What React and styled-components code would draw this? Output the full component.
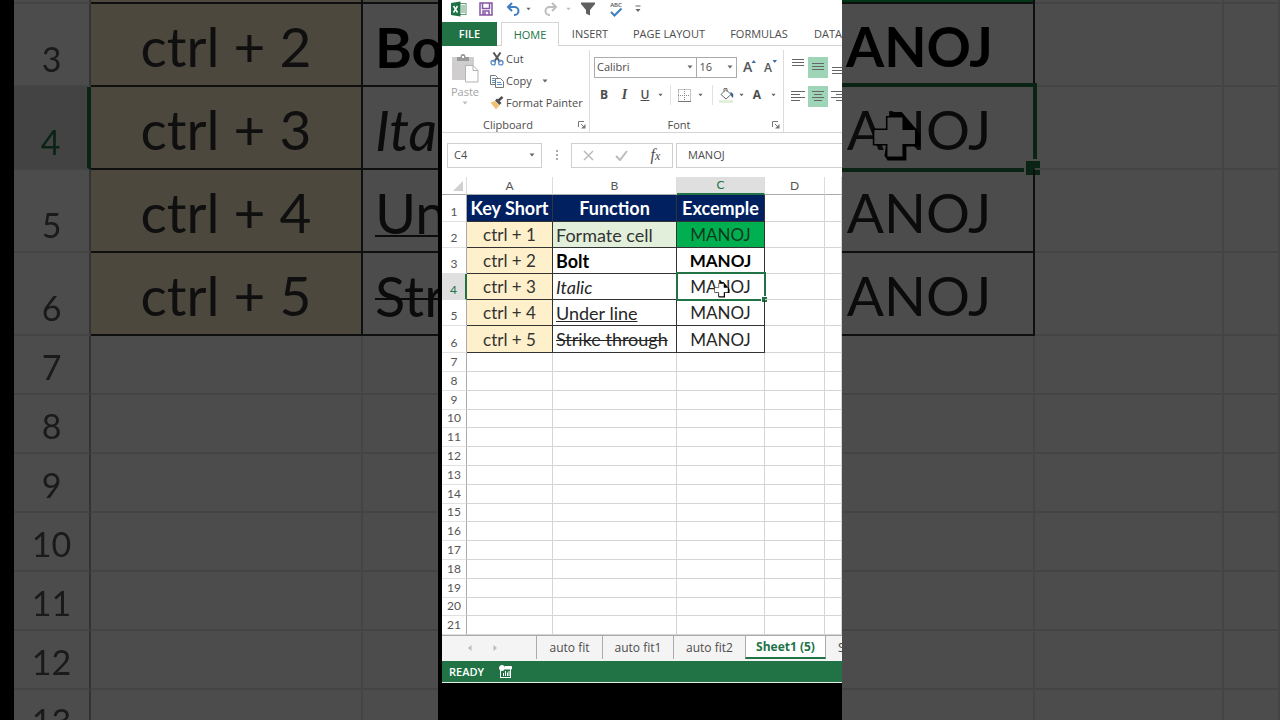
import React from 'react';
import styled, { createGlobalStyle, css } from 'styled-components';

const GlobalStyle = createGlobalStyle`
  *, *::before, *::after { box-sizing: border-box; }
  body { margin: 0; background: #000; font-family: "Open Sans", "Noto Sans", sans-serif; }
  button, input, select { font: inherit; color: inherit; margin: 0; padding: 0; border: 0; background: none; border-radius: 0; outline: none; }
`;

const green = '#217346';
const ink = '#4c4c4c';

const Stage = styled.main`
  display: grid;
  grid-template-columns: minmax(0, 1fr) 404px minmax(0, 1fr);
  height: 100vh;
  overflow: hidden;
  background: #000;
`;

const Side = styled.div`
  display: flex;
  align-items: flex-start;
  justify-content: ${(p) => (p.$right ? 'flex-end' : 'flex-start')};
  padding-left: ${(p) => (p.$right ? 0 : 14)}px;
  overflow: hidden;
  filter: brightness(0.3);
`;

const Phone = styled.div`
  padding-left: 4px;
  background: #000;
  overflow: hidden;
`;

const Workbook = styled.div`
  display: flex;
  flex-direction: column;
  background: #fff;
  color: ${ink};
  font-size: 11px;
  line-height: 16px;
  overflow: hidden;
`;

/* ---------- title and tabs ---------- */

const QuickAccess = styled.header`
  display: flex;
  align-items: center;
  height: 22px;
  padding: 0 0 4px 9px;
`;

const QuickButton = styled.button`
  display: flex;
  align-items: center;
  justify-content: center;
  width: ${(p) => p.$width}px;
  height: 18px;
`;

const Tabs = styled.nav`
  display: flex;
  height: 24px;
  border-bottom: 1px solid #d4d4d4;
`;

const Tab = styled.button`
  flex: none;
  width: ${(p) => p.$width}px;
  height: 24px;
  font-size: 11px;
  white-space: nowrap;
  ${(p) => p.$file && css`background: ${green}; color: #fff; font-weight: 600; margin-right: 4px;`}
  ${(p) => p.$active && css`
    color: ${green};
    background: #fff;
    border: 1px solid #d4d4d4;
    border-bottom: 0;
  `}
`;

/* ---------- ribbon ---------- */

const Ribbon = styled.section`
  display: flex;
  height: 87px;
  padding: 4px 0 0;
  border-bottom: 1px solid #d4d4d4;
`;

const Group = styled.div`
  display: flex;
  flex: none;
  flex-direction: column;
  justify-content: space-between;
  width: ${(p) => p.$width}px;
  padding: 0 1px 0 4px;
  border-right: 1px solid #dcdcdc;
`;

const GroupLabel = styled.div`
  display: flex;
  align-items: center;
  justify-content: center;
  height: 14px;
`;

const LabelText = styled.span`
  flex: 1;
  padding-right: 8px;
  text-align: center;
  font-size: 11px;
  line-height: 14px;
`;

const Launcher = styled.button`
  display: flex;
  width: 10px;
  height: 8px;
`;

const ClipboardBody = styled.div`
  display: flex;
  gap: 6px;
`;

const PasteButton = styled.button`
  display: flex;
  flex-direction: column;
  align-items: center;
  gap: 1px;
  width: 38px;
  padding-top: 3px;
  color: #a3a3a3;
`;

const CommandList = styled.div`
  display: flex;
  flex-direction: column;
  gap: 6px;
  padding-top: 1px;
`;

const Command = styled.button`
  display: flex;
  align-items: center;
  gap: 2px;
  height: 16px;
  white-space: nowrap;
  font-size: 11px;
  svg:last-child:not(:first-child) { margin-left: 8px; }
`;

const Tools = styled.div`
  display: flex;
  align-items: center;
  height: 22px;
  margin-top: ${(p) => p.$top || 0}px;
`;

const ToolButton = styled.button`
  display: flex;
  align-items: center;
  justify-content: center;
  width: ${(p) => p.$width || 20}px;
  height: 21px;
  font-size: 12px;
  font-weight: ${(p) => (p.$bold ? 700 : 400)};
  background: ${(p) => (p.$on ? '#9fd5b7' : 'none')};
`;

const LetterI = styled.i`
  font-family: "Liberation Serif", serif;
  font-size: 14px;
  font-weight: 700;
`;

const FunctionMark = styled.i`
  font-family: "Liberation Serif", serif;
  font-size: 16px;
  small { font-size: 12px; }
`;

const LetterU = styled.span`
  text-decoration: underline;
  font-weight: 600;
`;

const Divider = styled.span`
  width: 1px;
  height: 20px;
  margin: 0 5px;
  background: #e1e1e1;
`;

const Combo = styled.label`
  display: flex;
  align-items: center;
  justify-content: space-between;
  width: ${(p) => p.$width}px;
  height: 21px;
  margin-right: ${(p) => p.$gap || 0}px;
  padding: 0 3px 0 2px;
  border: 1px solid #ababab;
  border-left-width: ${(p) => (p.$joined ? 0 : 1)}px;
`;

const Select = styled.select`
  flex: 1;
  min-width: 0;
  appearance: none;
  font-size: 11px;
`;

const AlignGroup = styled.div`
  display: flex;
  flex: none;
  flex-direction: column;
  padding-left: 4px;
`;

/* ---------- formula bar ---------- */

const FormulaBar = styled.section`
  display: flex;
  align-items: center;
  height: 44px;
  padding-left: 5px;
`;

const NameBox = styled.label`
  display: flex;
  align-items: center;
  width: 95px;
  height: 25px;
  padding: 0 5px 0 6px;
  border: 1px solid #cfcfcf;
`;

const BarInput = styled.input`
  flex: 1;
  width: 100%;
  min-width: 0;
  font-size: 11px;
`;

const Grip = styled.span`
  display: flex;
  justify-content: center;
  width: 29px;
`;

const FormulaTools = styled.div`
  display: flex;
  align-items: center;
  justify-content: space-around;
  width: 102px;
  height: 25px;
  border: 1px solid #cfcfcf;
`;

const FormulaField = styled.label`
  display: flex;
  flex: 1;
  height: 25px;
  margin-left: 3px;
  padding-left: 11px;
  border: 1px solid #cfcfcf;
  border-right: 0;
`;

/* ---------- grid ---------- */

const phoneSizes = css`
  --text: 17px;
  --text-wide: 18px;
  --label: 12px;
  --line: 1px;
  --sel: 2px;
  --pad: 3px;
  --text-drop: 0;
  --label-drop: 1px;
  --label-line: 16px;
  --handle: 5px;
  --cursor: 16px;
  --cursor-x: 1px;
  --cursor-y: 3px;
  --tall: 26px;
  --short: 19px;
  --gridline: #d4d4d4;
`;

const largeSizes = css`
  --text: 55px;
  --text-wide: 56px;
  --label: 34px;
  --line: 2px;
  --sel: 4px;
  --pad: 12px;
  --text-drop: 4px;
  --label-drop: 4px;
  --label-line: 44px;
  --handle: 14px;
  --cursor: 50px;
  --cursor-x: 3px;
  --cursor-y: 9px;
  --tall: 83px;
  --short: 59px;
  --gridline: #e2e2e2;
`;

const Grid = styled.table`
  ${(p) => (p.$large ? largeSizes : phoneSizes)}
  flex: none;
  width: calc(100% + ${(p) => p.$bleed || 0}px);
  table-layout: fixed;
  border-collapse: separate;
  border-spacing: 0;
  background: #fff;
  font-family: Lato, "Open Sans", sans-serif;
`;

const Column = styled.col`
  width: ${(p) => (p.$width ? `${p.$width}px` : 'auto')};
`;

const ColumnHead = styled.th`
  height: 18px;
  padding: 0;
  border-right: 1px solid #dcdcdc;
  border-bottom: 1px solid #ababab;
  font-size: 12px;
  line-height: 16px;
  font-weight: 400;
  color: #555;
  ${(p) => p.$on && css`background: #dfdfdf; color: ${green}; border-bottom: 2px solid ${green};`}
`;

const Corner = styled(ColumnHead)`
  text-align: right;
  svg { display: block; margin: 0 3px 0 auto; }
`;

const Row = styled.tr`
  height: var(${(p) => (p.$tall ? '--tall' : '--short')});
  ${(p) => p.$extra && css`height: calc(var(--tall) + 1px);`}
  ${(p) => p.$sliver && css`height: 4px;`}
  ${(p) => p.$trim && css`height: 18px;`}
`;

const RowHead = styled.th`
  padding: 0 0 ${(p) => (p.$blank ? '0' : 'var(--label-drop)')};
  vertical-align: bottom;
  border-right: var(--line) solid #ababab;
  border-bottom: var(--line) solid #e1e1e1;
  font-size: var(--label);
  line-height: var(--label-line);
  font-weight: 400;
  color: #555;
  ${(p) => p.$on && css`background: #dfdfdf; color: ${green}; border-right: var(--sel) solid ${green};`}
`;

const tones = {
  head: css`background: #002060; color: #fff; font-weight: 700; text-align: center; font-size: var(--text-wide);`,
  key: css`background: #fff0cc; text-align: center; color: #333;`,
  plain: css`padding-left: var(--pad); font-size: var(--text-wide);`,
  mint: css`background: #e2efda; color: #333; padding-left: var(--pad); font-size: var(--text-wide);`,
  vivid: css`background: #00b050; text-align: center; color: #10391f;`,
  sample: css`text-align: center;`,
};

const Cell = styled.td`
  position: relative;
  padding: ${(p) => (p.children ? 'var(--text-drop)' : '0')} 0 0;
  border-right: var(--line) solid var(--gridline);
  border-bottom: var(--line) solid var(--gridline);
  font-size: var(--text);
  line-height: 1;
  white-space: nowrap;
  color: #262626;
  ${(p) => p.$tone && css`border-color: #333;`}
  ${(p) => p.$tone && tones[p.$tone]}
  ${(p) => p.$bold && css`font-weight: 700; color: #000;`}
  ${(p) => p.$italic && css`font-style: italic;`}
  ${(p) => p.$line && css`text-decoration: ${p.$line}; text-decoration-thickness: var(--line);`}
`;

const Selection = styled.span`
  position: absolute;
  inset: calc(-1 * var(--sel)) calc(-1 * var(--sel)) calc(-1 * var(--sel)) calc(-1 * var(--line));
  border: var(--sel) solid ${green};
  &::after {
    content: "";
    position: absolute;
    right: calc(-1 * var(--handle) / 2);
    bottom: calc(-1 * var(--handle) / 2);
    width: var(--handle);
    height: var(--handle);
    background: ${green};
    outline: var(--line) solid #fff;
  }
`;

const Pointer = styled.svg`
  position: absolute;
  left: calc(50% - var(--cursor) / 2 + var(--cursor-x));
  top: calc(50% - var(--cursor) / 2 + var(--cursor-y));
  width: var(--cursor);
  height: var(--cursor);
`;

/* ---------- sheet tabs and status ---------- */

const SheetBar = styled.nav`
  display: flex;
  height: 26px;
  padding-bottom: 2px;
  background: #f4f4f4;
  border-top: 1px solid #ababab;
`;

const SheetNav = styled.div`
  display: flex;
  align-items: center;
  justify-content: center;
  gap: 20px;
  flex: none;
  width: 94px;
  padding-right: 12px;
`;

const NavButton = styled.button`
  display: flex;
  width: 6px;
  height: 8px;
`;

const SheetTab = styled.button`
  flex: none;
  width: ${(p) => p.$width}px;
  border-left: 1px solid #ababab;
  font-size: 12px;
  line-height: 20px;
  white-space: nowrap;
  ${(p) => p.$active && css`
    background: #fff;
    color: ${green};
    font-weight: 700;
    border-right: 1px solid #ababab;
    border-bottom: 2px solid ${green};
  `}
  ${(p) => p.$last && css`border: 0; text-align: left; padding-left: 12px;`}
`;

const Status = styled.footer`
  display: flex;
  align-items: center;
  gap: 15px;
  height: 22px;
  padding-left: 7px;
  background: ${green};
  border-bottom: 1px solid #e5efe9;
  color: #fff;
  font-size: 11px;
  font-weight: 600;
`;

/* ---------- drawings ---------- */

const OpenSvg = styled.svg`
  overflow: visible;
`;

const Caret = ({ color = '#666', size = 6 }) => (
  <svg width={size} height="4" viewBox="0 0 6 4" aria-hidden="true"><path d="M0.5 0.5h5L3 3.5z" fill={color} /></svg>
);

const ExcelIcon = () => (
  <svg width="16" height="16" viewBox="0 0 16 16">
    <rect x="8" y="2.5" width="7" height="11" fill="#fff" stroke="#5f9c7a" />
    <path d="M10 5h4M10 7h4M10 9h4M10 11h4" stroke="#5f9c7a" />
    <path d="M0 2l9.500-1.500v15L0 14z" fill="#1e7145" />
    <path d="M2.500 5l4 6.500M6.500 5l-4 6.500" stroke="#fff" strokeWidth="1.500" />
  </svg>
);

const SaveIcon = () => (
  <svg width="14" height="14" viewBox="0 0 14 14" fill="none" stroke="#8455a5" strokeWidth="1.500">
    <path d="M1 1h12v12H1zM3.500 1v5.500h7V1M4 13V9h6v4" /><path d="M6 10v3" />
  </svg>
);

const UndoIcon = ({ color, flip }) => (
  <svg width="15" height="14" viewBox="0 0 15 14" fill="none" stroke={color} strokeWidth="2">
    <g transform={flip ? 'matrix(-1 0 0 1 15 0)' : undefined}>
      <path d="M6 1L2 5l4 4M2 5h6.500a4 4 0 0 1 0 8H8" />
    </g>
  </svg>
);

const FunnelIcon = () => (
  <svg width="14" height="14" viewBox="0 0 14 14"><path d="M0 0.500h14v1.500L9 8v5.500L5 11.500V8L0 2z" fill="#5f5f5f" /></svg>
);

const SpellIcon = () => (
  <OpenSvg width="14" height="17" viewBox="0 0 14 17">
    <text x="7" y="6" fontSize="6" fontWeight="600" textAnchor="middle" fill="#555" fontFamily="Open Sans, sans-serif">ABC</text>
    <path d="M2 11l3.500 3.500L12.500 7.500" fill="none" stroke="#3f7fbf" strokeWidth="2" />
  </OpenSvg>
);

const MoreIcon = () => (
  <svg width="6" height="8" viewBox="0 0 6 8"><path d="M0.500 1h5" stroke="#666" /><path d="M0.500 4h5L3 7z" fill="#666" /></svg>
);

const PasteIcon = () => (
  <svg width="28" height="30" viewBox="0 0 28 30">
    <rect x="1" y="4" width="22" height="23" rx="1" fill="#cfcdcd" />
    <path d="M6 8V4h3.500a2.500 3 0 0 1 5 0H18v4z" fill="#999" />
    <rect x="11" y="3" width="2" height="2" fill="#fff" />
    <path d="M14.500 12.500h7.500l5 5v11.500H14.500z" fill="#fdfdfd" stroke="#b3b3b3" />
    <path d="M22 12.500v5h5" fill="none" stroke="#b3b3b3" />
  </svg>
);

const CutIcon = () => (
  <svg width="14" height="14" viewBox="0 0 14 14" fill="none">
    <path d="M3.500 0.500l6.500 9.500M10.500 0.500L4 10" stroke="#555" strokeWidth="2" />
    <circle cx="3.200" cy="10.700" r="2.200" stroke="#5b8fc9" strokeWidth="1.300" />
    <circle cx="10.800" cy="10.700" r="2.200" stroke="#5b8fc9" strokeWidth="1.300" />
  </svg>
);

const CopyIcon = () => (
  <svg width="14" height="14" viewBox="0 0 14 14" fill="#fff" stroke="#777">
    <path d="M0.500 1.500h5l2 2v7h-7z" /><path d="M2 4.500h3M2 6.500h3M2 8.500h3" stroke="#5b8fc9" />
    <path d="M5.500 4.500h5l3 3v6h-8z" /><path d="M7 8.500h4M7 10.500h5" stroke="#5b8fc9" />
  </svg>
);

const PainterIcon = () => (
  <svg width="14" height="14" viewBox="0 0 14 14">
    <path d="M0.500 6.500L5 5l4.500 4.500L6 13.500z" fill="#f0c274" />
    <path d="M5 4.500L7 2.500l4.500 4.500-2 2z" fill="#4c4c4c" />
    <path d="M8.500 4.500L12.500 1" stroke="#4c4c4c" strokeWidth="2.500" />
  </svg>
);

const LaunchIcon = () => (
  <svg width="8" height="8" viewBox="0 0 8 8" fill="none" stroke="#777"><path d="M0.500 6V0.500H6M3 3l3 3" /><path d="M7.500 3v4.500H3z" fill="#777" stroke="none" /></svg>
);

const SizeIcon = ({ down }) => (
  <OpenSvg width="14" height="16" viewBox="0 0 14 16">
    <text x="0" y="13" fontSize={down ? 12 : 14} fontWeight="600" fill="#555" fontFamily="Open Sans, sans-serif">A</text>
    <path d={down ? 'M8.500 1h4.500L10.750 4z' : 'M8.500 4h4.500L10.750 1z'} fill="#3f6fa8" />
  </OpenSvg>
);

const BorderIcon = () => (
  <svg width="13" height="13" viewBox="0 0 13 13" fill="none" stroke="#888"><path d="M0.500 0.500h12v12M0.500 0.500v12M6.500 0v12M0 6.500h12" strokeDasharray="1 1" /><path d="M0 12.500h13" stroke="#777" /></svg>
);

const BucketIcon = () => (
  <svg width="16" height="16" viewBox="0 0 16 16" fill="none">
    <rect x="0" y="13" width="14" height="3" fill="#e2efda" />
    <path d="M2 7.500l5-5 5 5-5 4.500z" fill="#fff" stroke="#666" /><path d="M5 5V1.500h3V5" stroke="#777" />
    <path d="M11.500 5c3 1 3 3 2.500 6-1-1-2-2-2.500-4z" fill="#35618f" />
  </svg>
);

const LinesIcon = ({ rows }) => (
  <svg width="14" height="20" viewBox="0 0 14 20" stroke="#666">
    {rows.map(([y, x1, x2]) => <path key={y} d={`M${x1} ${y + 0.5}H${x2}`} />)}
  </svg>
);

const CrossPointer = () => (
  <Pointer viewBox="0 0 16 16">
    <path d="M6 0h3.500L15.500 7v4h-4.500v4.500H5l-1-1.500z" fill="#000" />
    <path d="M4.700 1.500h5.300v4h4v5h-4v4h-5.300v-4H0.500v-5h4.200z" fill="#fff" stroke="#000" strokeWidth="0.500" />
  </Pointer>
);

/* ---------- data ---------- */

const entries = [
  { n: 1, key: 'Key Short', fn: 'Function', sample: 'Excemple', head: true, extra: true },
  { n: 2, key: 'ctrl + 1', fn: 'Formate cell', sample: 'MANOJ', fnTone: 'mint', sampleTone: 'vivid' },
  { n: 3, key: 'ctrl + 2', fn: 'Bolt', sample: 'MANOJ', bold: true },
  { n: 4, key: 'ctrl + 3', fn: 'Italic', sample: 'MANOJ', italic: true, selected: true },
  { n: 5, key: 'ctrl + 4', fn: 'Under line', sample: 'MANOJ', line: 'underline' },
  { n: 6, key: 'ctrl + 5', fn: 'Strike through', sample: 'MANOJ', line: 'line-through', extra: true },
];

const range = (from, to) => Array.from({ length: to - from + 1 }, (_, i) => from + i);

function KeyCells({ entry }) {
  const { n, head, selected } = entry;
  return (
    <>
      <RowHead scope="row" $on={selected}>{n}</RowHead>
      <Cell $tone={head ? 'head' : 'key'}>{entry.key}</Cell>
      <Cell $tone={head ? 'head' : entry.fnTone || 'plain'} $bold={entry.bold} $italic={entry.italic} $line={entry.line}>{entry.fn}</Cell>
    </>
  );
}

function SampleCells({ entry }) {
  return (
    <>
      <Cell $tone={entry.head ? 'head' : entry.sampleTone || 'sample'} $bold={entry.bold}>
        {entry.sample}
        {entry.selected && <><Selection /><CrossPointer /></>}
      </Cell>
      <Cell /><Cell />
    </>
  );
}

function Columns({ widths }) {
  return <colgroup>{widths.map((w, i) => <Column key={i} $width={w} />)}</colgroup>;
}

function LargeKeys() {
  return (
    <Grid $large $bleed={88}>
      <Columns widths={[77, 272, null]} />
      <tbody>
        <Row $sliver><RowHead $blank /><Cell $tone="key" /><Cell $tone="mint" /></Row>
        {entries.slice(2).map((e) => <Row key={e.n} $tall><KeyCells entry={e} /></Row>)}
        {range(7, 13).map((n) => <Row key={n}><RowHead scope="row">{n}</RowHead><Cell /><Cell /></Row>)}
      </tbody>
    </Grid>
  );
}

function LargeSamples() {
  return (
    <Grid $large $bleed={88}>
      <Columns widths={[281, 189, null]} />
      <tbody>
        <Row $sliver><Cell $tone="vivid" /><Cell /><Cell /></Row>
        {entries.slice(2).map((e) => <Row key={e.n} $tall><SampleCells entry={e} /></Row>)}
        {range(7, 13).map((n) => <Row key={n}><Cell /><Cell /><Cell /></Row>)}
      </tbody>
    </Grid>
  );
}

function Sheet() {
  return (
    <Grid>
      <Columns widths={[25, 86, 124, 88, 60, null]} />
      <thead>
        <tr>
          <Corner aria-label="Select all"><svg width="10" height="10" viewBox="0 0 10 10"><path d="M10 0v10H0z" fill="#d0d0d0" /></svg></Corner>
          {['A', 'B', 'C', 'D', ''].map((c) => <ColumnHead key={c} $on={c === 'C'}>{c}</ColumnHead>)}
        </tr>
      </thead>
      <tbody>
        {entries.map((e) => <Row key={e.n} $tall $extra={e.extra}><KeyCells entry={e} /><SampleCells entry={e} /></Row>)}
        {range(7, 21).map((n) => (
          <Row key={n} $trim={n % 5 === 0}>
            <RowHead scope="row">{n}</RowHead>
            <Cell /><Cell /><Cell /><Cell /><Cell />
          </Row>
        ))}
      </tbody>
    </Grid>
  );
}

const leftRows = [[5, 0, 14], [8, 0, 9], [11, 0, 14], [14, 0, 9]];
const centerRows = [[5, 1, 13], [8, 3, 11], [11, 1, 13], [14, 3, 11]];
const rightRows = [[5, 0, 14], [8, 5, 14], [11, 0, 14], [14, 5, 14]];

export default function App() {
  return (
    <Stage>
      <GlobalStyle />
      <Side aria-hidden="true"><LargeKeys /></Side>
      <Phone>
        <Workbook>
          <QuickAccess>
            <QuickButton $width={16} aria-label="Excel"><ExcelIcon /></QuickButton>
            <QuickButton $width={38} aria-label="Save"><SaveIcon /></QuickButton>
            <QuickButton $width={16} aria-label="Undo"><UndoIcon color="#3f7fbf" /></QuickButton>
            <QuickButton $width={14} aria-label="Undo history"><Caret size={5} /></QuickButton>
            <QuickButton $width={30} aria-label="Redo"><UndoIcon color="#bdbdbd" flip /></QuickButton>
            <QuickButton $width={6} aria-label="Redo history"><Caret size={5} color="#bdbdbd" /></QuickButton>
            <QuickButton $width={34} aria-label="Filter"><FunnelIcon /></QuickButton>
            <QuickButton $width={22} aria-label="Spelling"><SpellIcon /></QuickButton>
            <QuickButton $width={22} aria-label="Customize toolbar"><MoreIcon /></QuickButton>
          </QuickAccess>
          <Tabs>
            <Tab $file $width={55}>FILE</Tab>
            <Tab $active $width={58}>HOME</Tab>
            <Tab $width={62}>INSERT</Tab>
            <Tab $width={96}>PAGE LAYOUT</Tab>
            <Tab $width={84}>FORMULAS</Tab>
            <Tab $width={54}>DATA</Tab>
          </Tabs>
          <Ribbon>
            <Group $width={148}>
              <ClipboardBody>
                <PasteButton><PasteIcon />Paste<Caret color="#bdbdbd" /></PasteButton>
                <CommandList>
                  <Command><CutIcon />Cut</Command>
                  <Command><CopyIcon />Copy<Caret /></Command>
                  <Command><PainterIcon />Format Painter</Command>
                </CommandList>
              </ClipboardBody>
              <GroupLabel><LabelText>Clipboard</LabelText><Launcher aria-label="Clipboard options"><LaunchIcon /></Launcher></GroupLabel>
            </Group>
            <Group $width={194}>
              <div>
                <Tools $top={6}>
                  <Combo $width={104}>
                    <Select aria-label="Font" defaultValue="Calibri"><option>Calibri</option></Select><Caret />
                  </Combo>
                  <Combo $width={40} $gap={3} $joined>
                    <Select aria-label="Font size" defaultValue="16"><option>16</option></Select><Caret />
                  </Combo>
                  <ToolButton aria-label="Grow font"><SizeIcon /></ToolButton>
                  <ToolButton $width={22} aria-label="Shrink font"><SizeIcon down /></ToolButton>
                </Tools>
                <Tools $top={6}>
                  <ToolButton $bold>B</ToolButton>
                  <ToolButton $width={21}><LetterI>I</LetterI></ToolButton>
                  <ToolButton><LetterU>U</LetterU></ToolButton>
                  <ToolButton $width={10} aria-label="Underline styles"><Caret size={5} /></ToolButton>
                  <Divider />
                  <ToolButton $width={17} aria-label="Borders"><BorderIcon /></ToolButton>
                  <ToolButton $width={14} aria-label="Border styles"><Caret size={5} /></ToolButton>
                  <Divider />
                  <ToolButton $width={18} aria-label="Fill color"><BucketIcon /></ToolButton>
                  <ToolButton $width={11} aria-label="Fill colors"><Caret size={5} /></ToolButton>
                  <ToolButton $width={20} $bold>A</ToolButton>
                  <ToolButton $width={12} aria-label="Font colors"><Caret size={5} /></ToolButton>
                </Tools>
              </div>
              <GroupLabel><LabelText>Font</LabelText><Launcher aria-label="Font options"><LaunchIcon /></Launcher></GroupLabel>
            </Group>
            <AlignGroup>
              <Tools $top={6}>
                <ToolButton aria-label="Top align"><LinesIcon rows={[[2, 1, 13], [5, 1, 13], [8, 1, 13]]} /></ToolButton>
                <ToolButton $on aria-label="Middle align"><LinesIcon rows={[[6, 1, 13], [9, 1, 13], [12, 1, 13]]} /></ToolButton>
                <ToolButton aria-label="Bottom align"><LinesIcon rows={[[10, 1, 13], [13, 1, 13], [16, 1, 13]]} /></ToolButton>
              </Tools>
              <Tools $top={7}>
                <ToolButton aria-label="Align left"><LinesIcon rows={leftRows} /></ToolButton>
                <ToolButton $on aria-label="Center"><LinesIcon rows={centerRows} /></ToolButton>
                <ToolButton aria-label="Align right"><LinesIcon rows={rightRows} /></ToolButton>
              </Tools>
            </AlignGroup>
          </Ribbon>
          <FormulaBar>
            <NameBox><BarInput aria-label="Name box" defaultValue="C4" /><Caret size={8} /></NameBox>
            <Grip><svg width="2" height="11" viewBox="0 0 2 11" fill="#aaa"><path d="M0 0h2v2H0zM0 4h2v2H0zM0 8h2v2H0z" /></svg></Grip>
            <FormulaTools>
              <ToolButton aria-label="Cancel"><svg width="11" height="11" viewBox="0 0 11 11"><path d="M1 1l9 9M10 1l-9 9" stroke="#bbb" strokeWidth="1.500" /></svg></ToolButton>
              <ToolButton aria-label="Enter"><svg width="13" height="11" viewBox="0 0 13 11"><path d="M1 6l4 4 7-9" fill="none" stroke="#bbb" strokeWidth="2" /></svg></ToolButton>
              <ToolButton aria-label="Insert function"><FunctionMark>f<small>x</small></FunctionMark></ToolButton>
            </FormulaTools>
            <FormulaField><BarInput aria-label="Formula" defaultValue="MANOJ" /></FormulaField>
          </FormulaBar>
          <Sheet />
          <SheetBar>
            <SheetNav>
              <NavButton aria-label="Previous sheet"><svg width="5" height="8" viewBox="0 0 5 8"><path d="M4.500 1v6L1 4z" fill="#bbb" /></svg></NavButton>
              <NavButton aria-label="Next sheet"><svg width="5" height="8" viewBox="0 0 5 8"><path d="M0.500 1v6L4 4z" fill="#bbb" /></svg></NavButton>
            </SheetNav>
            <SheetTab $width={66}>auto fit</SheetTab>
            <SheetTab $width={71}>auto fit1</SheetTab>
            <SheetTab $width={72}>auto fit2</SheetTab>
            <SheetTab $width={81} $active>Sheet1 (5)</SheetTab>
            <SheetTab $width={72} $last>Sheet1</SheetTab>
          </SheetBar>
          <Status>
            READY
            <svg width="13" height="13" viewBox="0 0 13 13" fill="none" stroke="#fff">
              <rect x="1.500" y="3.500" width="10" height="9" /><path d="M6 1.500h6.500V4H6z" fill="#fff" />
              <circle cx="3" cy="3" r="2.500" fill="#fff" /><path d="M4.500 11V8M6.500 11V6M8.500 11V7.500M10 11V6" />
            </svg>
          </Status>
        </Workbook>
      </Phone>
      <Side $right aria-hidden="true"><LargeSamples /></Side>
    </Stage>
  );
}
